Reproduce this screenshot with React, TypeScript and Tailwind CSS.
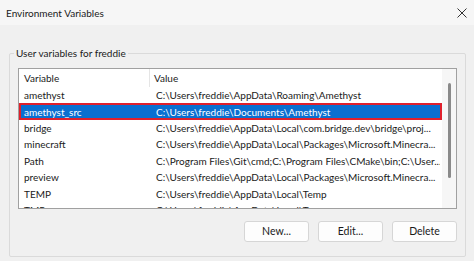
import React from "react";

const rows = [
  { name: "amethyst", value: "C:\\Users\\freddie\\AppData\\Roaming\\Amethyst" },
  { name: "amethyst_src", value: "C:\\Users\\freddie\\Documents\\Amethyst", selected: true },
  { name: "bridge", value: "C:\\Users\\freddie\\AppData\\Local\\com.bridge.dev\\bridge\\proj..." },
  { name: "minecraft", value: "C:\\Users\\freddie\\AppData\\Local\\Packages\\Microsoft.Minecra..." },
  { name: "Path", value: "C:\\Program Files\\Git\\cmd;C:\\Program Files\\CMake\\bin;C:\\User..." },
  { name: "preview", value: "C:\\Users\\freddie\\AppData\\Local\\Packages\\Microsoft.Minecra..." },
  { name: "TEMP", value: "C:\\Users\\freddie\\AppData\\Local\\Temp" },
  { name: "TMP", value: "C:\\Users\\freddie\\AppData\\Local\\Temp" },
];

const font = { fontFamily: "Lato, 'Noto Sans', sans-serif" };

function Button({ label }: { label: string }) {
  return (
    <button className="w-[65px] h-[21px] rounded-[3px] border border-[#d6d6d6] bg-[#fdfdfd] text-[10.5px] text-[#1a1a1a] leading-none flex items-center justify-center">
      {label}
    </button>
  );
}

export default function App() {
  return (
    <div
      className="w-[474px] h-[261px] bg-[#f0f0f0] overflow-hidden text-[#1a1a1a] flex flex-col"
      style={font}
    >
      {/* Title bar */}
      <div className="h-[25px] shrink-0 bg-[#f6f6f6] flex items-center justify-between pl-[6px] pr-[7px]">
        <span className="text-[10px] leading-none">Environment Variables</span>
        <svg width="10" height="10" viewBox="0 0 10 10" className="text-[#333]">
          <path d="M0.5 0.5 L9.5 9.5 M9.5 0.5 L0.5 9.5" stroke="currentColor" strokeWidth="1" fill="none" />
        </svg>
      </div>

      {/* Group box */}
      <div className="relative mt-[28px] ml-[9px] mr-[8px] mb-[4px] flex-1 border border-[#dadada] rounded-[2px] pl-[8px] pr-[8px] pt-[14px] pb-[14px] flex flex-col">
        <span className="absolute -top-[8px] left-[4px] bg-[#f0f0f0] px-[2px] text-[10px] leading-[14px]">
          User variables for freddie
        </span>

        {/* List */}
        <div className="h-[141px] shrink-0 bg-white border border-[#a0a0a0] flex overflow-hidden">
          <div className="flex-1 min-w-0 flex flex-col">
            <div className="h-[18px] shrink-0 flex text-[10px] leading-none">
              <div className="w-[131px] shrink-0 pl-[5px] flex items-center border-r border-[#e5e5e5]">Variable</div>
              <div className="flex-1 pl-[4px] flex items-center">Value</div>
            </div>
            {rows.map((r) => (
              <div
                key={r.name}
                className={
                  r.selected
                    ? "h-[16.4px] shrink-0 flex text-[10px] leading-none bg-[#0a6fd0] text-white border-2 border-[#e0202c]"
                    : "h-[16.4px] shrink-0 flex text-[10px] leading-none border-2 border-transparent"
                }
              >
                <div className="w-[129px] shrink-0 pl-[3px] flex items-center">{r.name}</div>
                <div className="flex-1 min-w-0 pl-[6px] flex items-center whitespace-nowrap overflow-hidden">
                  {r.value}
                </div>
              </div>
            ))}
          </div>
          {/* Scrollbar */}
          <div className="w-[14px] shrink-0 bg-[#f6f6f6] flex justify-center pt-[14px]">
            <div className="w-[3px] h-[95px] rounded-full bg-[#8a8a8a]" />
          </div>
        </div>

        {/* Buttons */}
        <div className="mt-auto flex justify-end gap-[9px]">
          <Button label="New..." />
          <Button label="Edit..." />
          <Button label="Delete" />
        </div>
      </div>
    </div>
  );
}
